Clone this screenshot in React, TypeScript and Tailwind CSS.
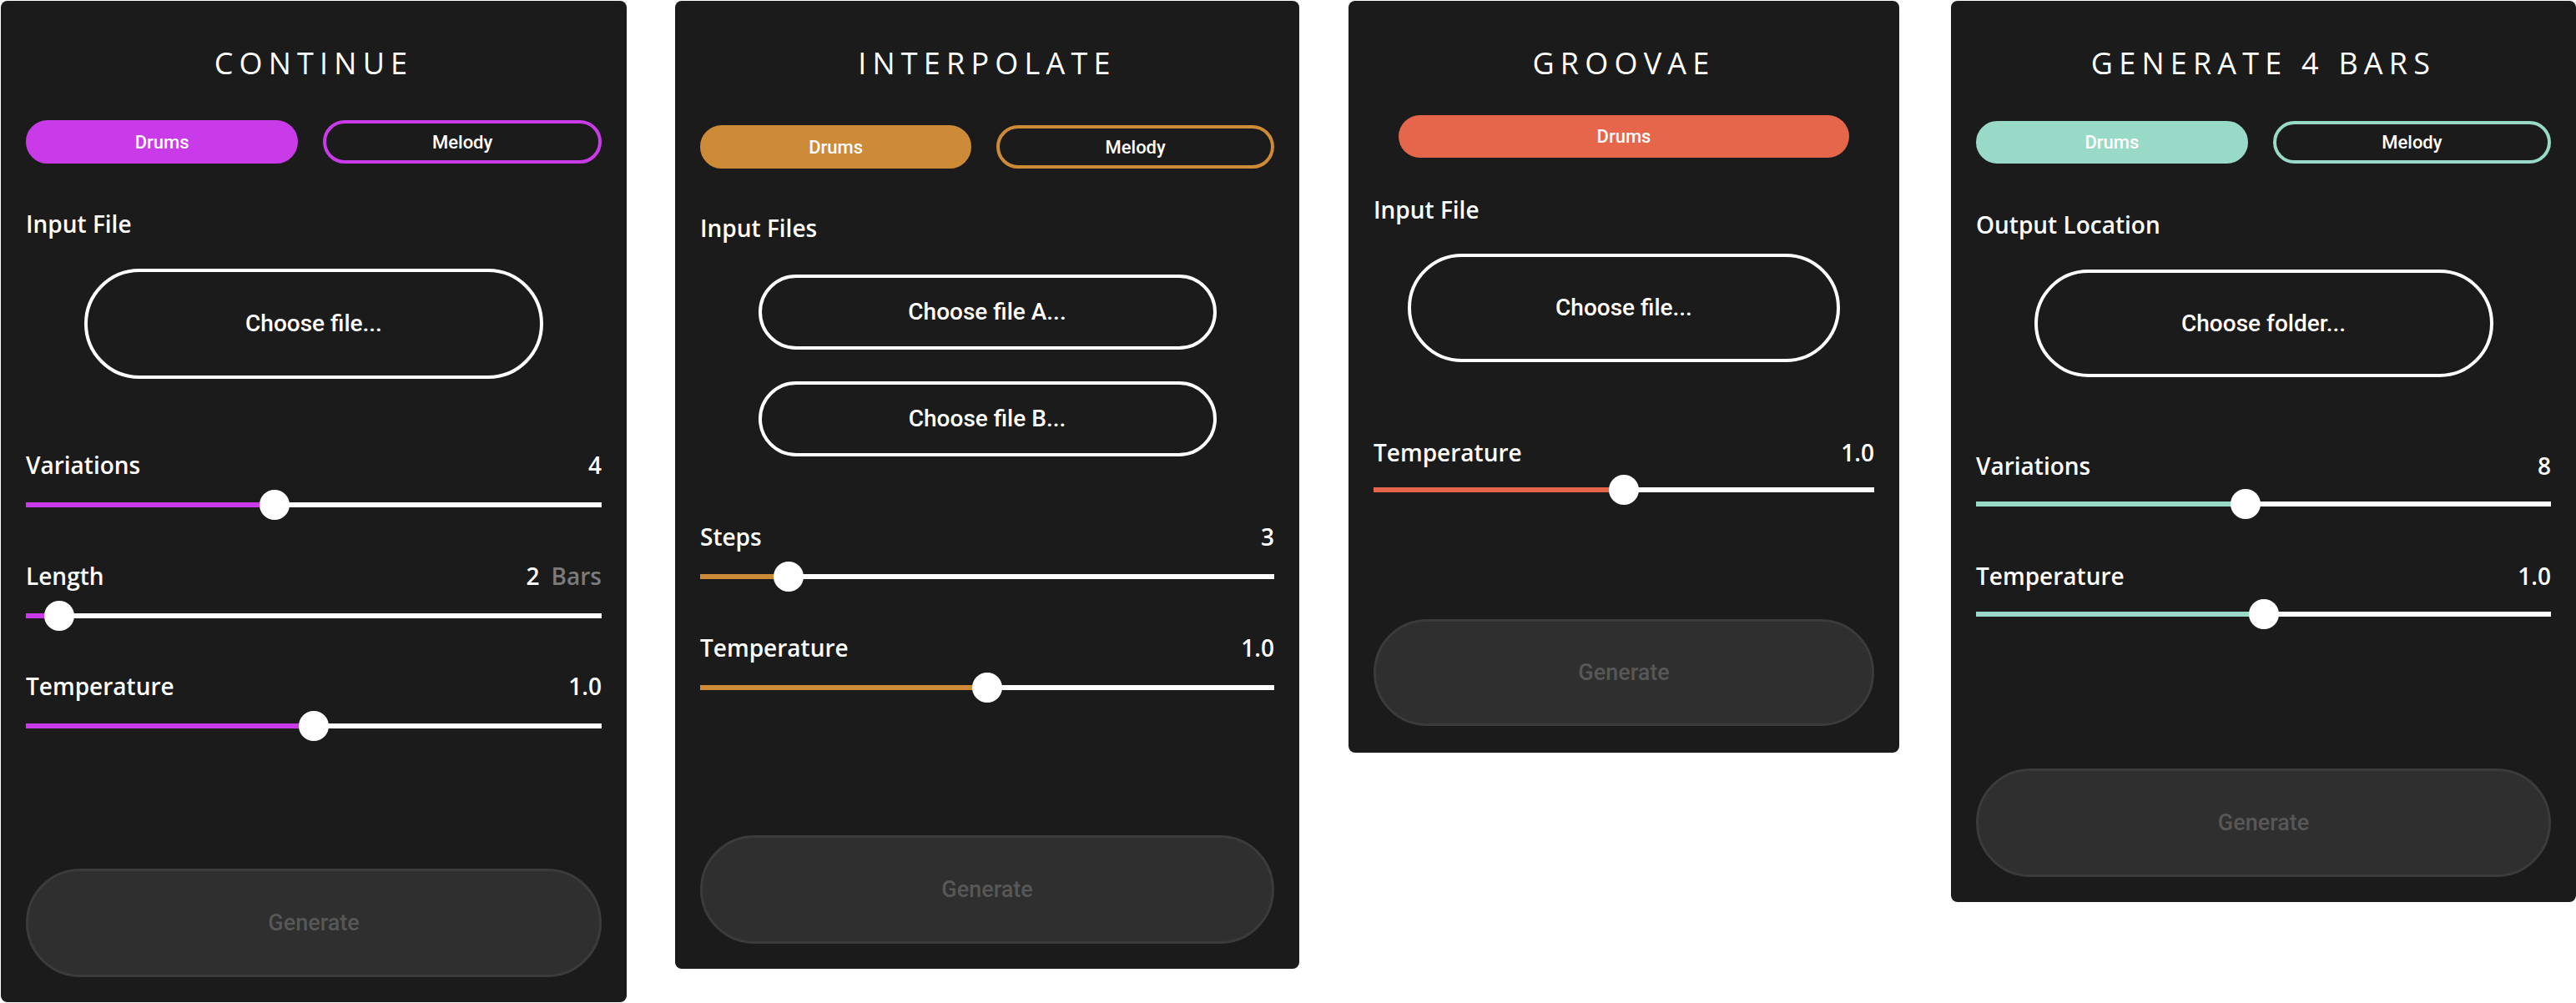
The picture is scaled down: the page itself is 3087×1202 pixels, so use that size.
import React from "react";

const MAGENTA = { solid: "bg-[#c93ae8] border-[#c93ae8]", outline: "border-[#c93ae8]", fill: "bg-[#c93ae8]" };
const ORANGE = { solid: "bg-[#cd8a37] border-[#cd8a37]", outline: "border-[#cd8a37]", fill: "bg-[#cd8a37]" };
const CORAL = { solid: "bg-[#e5664b] border-[#e5664b]", outline: "border-[#e5664b]", fill: "bg-[#e5664b]" };
const MINT = { solid: "bg-[#99d9c7] border-[#99d9c7]", outline: "border-[#99d9c7]", fill: "bg-[#99d9c7]" };

type Accent = typeof MAGENTA;

function Panel({ className, children }: { className: string; children: React.ReactNode }) {
  return (
    <div className={`flex shrink-0 flex-col rounded-lg bg-[#1b1b1b] px-[30px] pb-[30px] pt-[57px] ${className}`}>
      {children}
    </div>
  );
}

function Title({ children }: { children: React.ReactNode }) {
  return (
    <h2 className="h-[36px] text-center font-['Open_Sans',sans-serif] text-[36px] font-normal leading-[36px] tracking-[0.2em] text-white">
      {children}
    </h2>
  );
}

function ModeToggle({ accent, className }: { accent: Accent; className: string }) {
  return (
    <div className={`flex gap-[30px] font-['Roboto',sans-serif] text-[22px] font-medium text-white ${className}`}>
      <button className={`flex h-full flex-auto items-center justify-center rounded-full border-4 ${accent.solid}`}>
        Drums
      </button>
      <button className={`flex h-full flex-auto items-center justify-center rounded-full border-4 bg-transparent ${accent.outline}`}>
        Melody
      </button>
    </div>
  );
}

function Label({ children, className = "" }: { children: React.ReactNode; className?: string }) {
  return (
    <div className={`font-['Open_Sans',sans-serif] text-[28px] font-semibold leading-[28px] text-white ${className}`}>
      {children}
    </div>
  );
}

function ChooseButton({ children, className }: { children: React.ReactNode; className: string }) {
  return (
    <button
      className={`flex items-center justify-center self-center rounded-full border-4 border-white bg-transparent font-['Roboto',sans-serif] text-[28px] font-medium text-white ${className}`}
    >
      {children}
    </button>
  );
}

interface SliderProps {
  label: string;
  value: string;
  unit?: string;
  pct: number;
  accent: Accent;
  className: string;
  trackGap: string;
}

function Slider({ label, value, unit, pct, accent, className, trackGap }: SliderProps) {
  return (
    <div className={className}>
      <Label className="flex justify-between">
        <span>{label}</span>
        <span className="flex gap-[14px]">
          {value}
          {unit && <span className="text-[#7b7b7b]">{unit}</span>}
        </span>
      </Label>
      <div className={`relative flex h-[36px] items-center ${trackGap}`}>
        <div className="h-[6px] w-full bg-white">
          <div className={`h-full ${accent.fill}`} style={{ width: `calc(18px + (100% - 36px) * ${pct})` }} />
        </div>
        <div
          className="absolute top-0 h-[36px] w-[36px] rounded-full bg-white"
          style={{ left: `calc((100% - 36px) * ${pct})` }}
        />
      </div>
    </div>
  );
}

function GenerateButton({ className }: { className: string }) {
  return (
    <button
      className={`flex w-full items-center justify-center rounded-full border-[3px] border-[#3b3b3b] bg-[#2f2f2f] font-['Roboto',sans-serif] text-[27px] font-medium text-[#575757] ${className}`}
    >
      Generate
    </button>
  );
}

export default function App() {
  return (
    <div className="flex items-start bg-white pl-[1px] pt-[1px]">
      {/* Continue */}
      <Panel className="w-[750px]">
        <Title>CONTINUE</Title>
        <ModeToggle accent={MAGENTA} className="mt-[50px] h-[52px]" />
        <Label className="mt-[58px]">Input File</Label>
        <ChooseButton className="mt-[40px] h-[132px] w-[550px]">Choose file...</ChooseButton>
        <Slider className="mt-[89px]" trackGap="mt-[16px]" label="Variations" value="4" pct={3 / 7} accent={MAGENTA} />
        <Slider className="mt-[53px]" trackGap="mt-[16px]" label="Length" value="2" unit="Bars" pct={0.034} accent={MAGENTA} />
        <Slider className="mt-[52px]" trackGap="mt-[16px]" label="Temperature" value="1.0" pct={0.5} accent={MAGENTA} />
        <GenerateButton className="mt-[153px] h-[130px]" />
      </Panel>

      {/* Interpolate */}
      <Panel className="ml-[58px] w-[748px]">
        <Title>INTERPOLATE</Title>
        <ModeToggle accent={ORANGE} className="mt-[56px] h-[52px]" />
        <Label className="mt-[57px]">Input Files</Label>
        <ChooseButton className="mt-[42px] h-[90px] w-[549px]">Choose file A...</ChooseButton>
        <ChooseButton className="mt-[38px] h-[90px] w-[549px]">Choose file B...</ChooseButton>
        <Slider className="mt-[82px]" trackGap="mt-[16px]" label="Steps" value="3" pct={0.135} accent={ORANGE} />
        <Slider className="mt-[53px]" trackGap="mt-[16px]" label="Temperature" value="1.0" pct={0.5} accent={ORANGE} />
        <GenerateButton className="mt-[159px] h-[130px]" />
      </Panel>

      {/* GrooVAE */}
      <Panel className="ml-[59px] w-[660px] pb-[32px]">
        <Title>GROOVAE</Title>
        <div className="mt-[44px] flex h-[51px] justify-center font-['Roboto',sans-serif] text-[22px] font-medium text-white">
          <button className={`flex w-[540px] items-center justify-center rounded-full ${CORAL.solid}`}>Drums</button>
        </div>
        <Label className="mt-[48px]">Input File</Label>
        <ChooseButton className="mt-[39px] h-[130px] w-[518px]">Choose file...</ChooseButton>
        <Slider className="mt-[94px]" trackGap="mt-[13px]" label="Temperature" value="1.0" pct={0.5} accent={CORAL} />
        <GenerateButton className="mt-[137px] h-[128px]" />
      </Panel>

      {/* Generate 4 bars */}
      <Panel className="ml-[62px] w-[749px]">
        <Title>GENERATE 4 BARS</Title>
        <ModeToggle accent={MINT} className="mt-[51px] h-[51px]" />
        <Label className="mt-[59px]">Output Location</Label>
        <ChooseButton className="mt-[40px] h-[129px] w-[550px]">Choose folder...</ChooseButton>
        <Slider className="mt-[92px]" trackGap="mt-[14px]" label="Variations" value="8" pct={0.467} accent={MINT} />
        <Slider className="mt-[54px]" trackGap="mt-[14px]" label="Temperature" value="1.0" pct={0.5} accent={MINT} />
        <GenerateButton className="mt-[167px] h-[130px]" />
      </Panel>
    </div>
  );
}
